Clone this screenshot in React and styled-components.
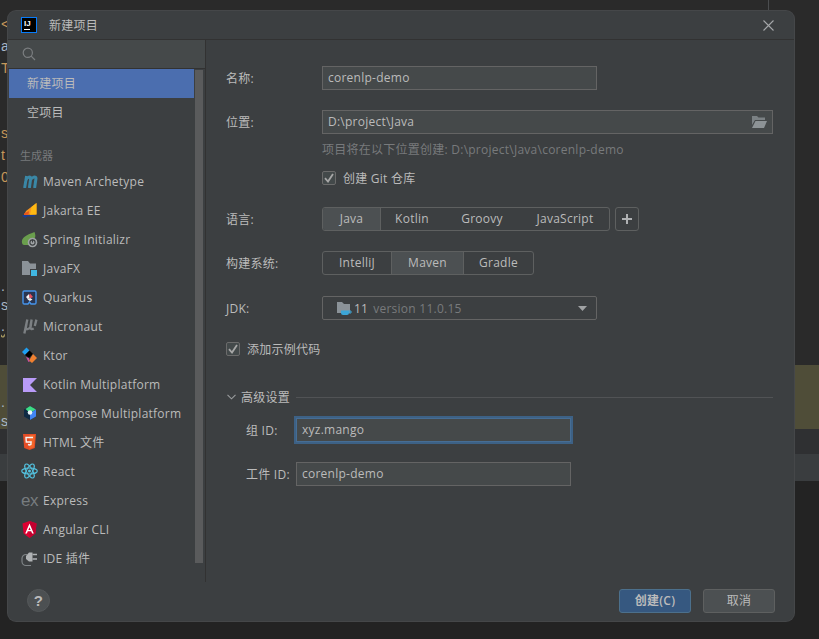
import React from 'react';
import styled, { createGlobalStyle } from 'styled-components';

const UI_FONT = `"Open Sans", "Noto Sans CJK SC", sans-serif`;

const GlobalStyle = createGlobalStyle`
  html, body {
    margin: 0;
    padding: 0;
    background: #232323;
  }
  * {
    box-sizing: border-box;
  }
`;

const Stage = styled.div`
  position: relative;
  width: 819px;
  height: 639px;
  overflow: hidden;
  display: flex;
  flex-direction: column;
  background: #232323;
`;

const EditorArea = styled.div`
  position: relative;
  height: 365px;
  background: #2a2a2a;
  padding-top: 14px;
  display: flex;
  flex-direction: column;
`;

const EditorGuide = styled.div`
  position: absolute;
  left: 768px;
  top: 0;
  width: 1px;
  height: 12px;
  background: #4b4d4f;
`;

const CodeLine = styled.div`
  height: ${(p) => p.$h || 21.8}px;
  padding-left: 1px;
  font: 14px/21.8px "Liberation Sans", sans-serif;
  color: ${(p) => p.$color || '#a9b7c6'};
  text-decoration: ${(p) => (p.$wavy ? 'underline wavy #a89a60' : 'none')};
`;

const Highlight = styled.div`
  height: 64px;
  background: #4f4d38;
  padding: 28px 0 0 1px;
  font: 14px/19px "Liberation Sans", sans-serif;
  color: #a9b7c6;
`;

const DarkBand = styled.div`
  height: 25px;
  background: #2f3032;
`;

const PanelBand = styled.div`
  height: 27px;
  background: #3a3d3f;
`;

const Dialog = styled.div`
  position: absolute;
  left: 8px;
  top: 11px;
  width: 786px;
  height: 610px;
  background: #3c3f41;
  border-radius: 8px;
  overflow: hidden;
  display: flex;
  flex-direction: column;
  font-family: ${UI_FONT};
  font-size: 12px;
  letter-spacing: 0.25px;
  color: #bbbbbb;
  box-shadow: 0 0 0 1px #454749;
`;

const TitleBar = styled.div`
  height: 29px;
  flex-shrink: 0;
  display: flex;
  align-items: center;
  padding: 0 20px 0 13px;
  border-bottom: 1px solid #323232;
`;

const TitleText = styled.span`
  margin-left: 12px;
  flex: 1;
`;

const AppLogo = styled.div`
  width: 16px;
  height: 16px;
  background: #000;
  border: 1px solid #087cfa;
  color: #fff;
  font: bold 8px/9px "Liberation Sans", sans-serif;
  letter-spacing: 0;
  padding: 1px 0 0 2px;
  position: relative;
  &::after {
    content: '';
    position: absolute;
    left: 2px;
    bottom: 2px;
    width: 6px;
    height: 1px;
    background: #fff;
  }
`;

const Body = styled.div`
  flex: 1;
  min-height: 0;
  display: flex;
`;

const Sidebar = styled.div`
  width: 198px;
  flex-shrink: 0;
  border-right: 1px solid #323232;
  display: flex;
  flex-direction: column;
`;

const SearchBox = styled.div`
  height: 29px;
  flex-shrink: 0;
  background: #45494a;
  border-bottom: 1px solid #323232;
  padding-left: 14px;
  display: flex;
  align-items: center;
`;

const SideScroll = styled.div`
  flex: 1;
  min-height: 0;
  display: flex;
`;

const List = styled.div`
  width: 186px;
  padding-left: 1px;
`;

const Scrollbar = styled.div`
  width: 8px;
  height: 493px;
  margin: 1px 0 0 1px;
  background: #5a5b5c;
`;

const TopItem = styled.div`
  height: 29px;
  line-height: 30px;
  padding-left: 18px;
  background: ${(p) => (p.$selected ? '#4b6eaf' : 'transparent')};
`;

const GroupLabel = styled.div`
  height: 40px;
  padding: 21px 0 0 11px;
  font-size: 11px;
  line-height: 16px;
  letter-spacing: 0;
  color: #77797b;
`;

const Item = styled.div`
  height: 29px;
  padding: 0 0 1px 12px;
  display: flex;
  align-items: center;
  gap: 5px;
`;

const IconBox = styled.div`
  width: 17px;
  height: 17px;
  flex-shrink: 0;
  display: flex;
  align-items: center;
  justify-content: center;
`;

const ExLogo = styled.span`
  font: 17px/17px "Liberation Sans", sans-serif;
  letter-spacing: -0.5px;
  color: #777c7f;
`;

const Main = styled.div`
  flex: 1;
  padding: 26px 21px 0 20px;
  display: flex;
  flex-direction: column;
`;

const Row = styled.div`
  display: flex;
  align-items: center;
  height: 24px;
  margin-top: ${(p) => p.$top || 0}px;
`;

const Label = styled.div`
  width: 96px;
  flex-shrink: 0;
`;

const Input = styled.div`
  width: ${(p) => p.$w}px;
  height: 24px;
  background: #45494a;
  border: 1px solid #646464;
  padding: 0 5px;
  line-height: 22px;
  display: flex;
  align-items: center;
  justify-content: space-between;
`;

const Hint = styled.div`
  margin: 7px 0 0 96px;
  height: 18px;
  line-height: 18px;
  color: #787a7c;
`;

const CheckRow = styled.div`
  display: flex;
  align-items: center;
  gap: 7px;
  height: 14px;
  margin: ${(p) => p.$top}px 0 0 ${(p) => p.$left || 0}px;
`;

const CheckBox = styled.div`
  width: 14px;
  height: 14px;
  background: #43494a;
  border: 1px solid #6b6b6b;
  border-radius: 2px;
  display: flex;
  align-items: center;
  justify-content: center;
`;

const Segments = styled.div`
  display: flex;
  height: 24px;
  border: 1px solid #5e6060;
  border-radius: 3px;
  overflow: hidden;
`;

const Segment = styled.div`
  width: ${(p) => p.$w}px;
  text-align: center;
  line-height: 21px;
  background: ${(p) => (p.$active ? '#4c5052' : 'transparent')};
  border-left: ${(p) => (p.$divider ? '1px solid #5e6060' : '0')};
  border-right: ${(p) => (p.$active ? '1px solid #5e6060' : '0')};
`;

const PlusButton = styled.div`
  width: 24px;
  height: 24px;
  margin-left: 5px;
  border: 1px solid #5e6060;
  border-radius: 3px;
  display: flex;
  align-items: center;
  justify-content: center;
`;

const Select = styled.div`
  width: 275px;
  height: 24px;
  border: 1px solid #646464;
  border-radius: 2px;
  background: #3c3f41;
  padding: 0 9px 0 13px;
  display: flex;
  align-items: center;
  gap: 2px;
`;

const Version = styled.span`
  color: #787a7c;
  margin-left: 3px;
  flex: 1;
`;

const SectionHead = styled.div`
  display: flex;
  align-items: center;
  height: 18px;
  margin: 32px 0 0 1px;
`;

const SectionTitle = styled.span`
  margin-left: 5px;
`;

const SectionLine = styled.div`
  flex: 1;
  height: 1px;
  background: #515355;
  margin-left: 6px;
`;

const SubRow = styled.div`
  display: flex;
  align-items: center;
  height: 24px;
  margin-top: ${(p) => p.$top}px;
  padding-left: 20px;
`;

const SubLabel = styled.div`
  width: 50px;
  flex-shrink: 0;
  white-space: nowrap;
`;

const FocusInput = styled(Input)`
  border: 1px solid #466d94;
  outline: 2px solid #3d6185;
`;

const Footer = styled.div`
  height: 39px;
  flex-shrink: 0;
  display: flex;
  align-items: flex-start;
  padding: 7px 19px 0 19px;
`;

const HelpButton = styled.div`
  width: 23px;
  height: 23px;
  border-radius: 50%;
  background: #4c5052;
  border: 1px solid #55585a;
  color: #bbbbbb;
  font: bold 15px/21px "Liberation Sans", sans-serif;
  text-align: center;
`;

const FooterSpacer = styled.div`
  flex: 1;
`;

const Button = styled.div`
  width: 72px;
  height: 24px;
  margin-left: 12px;
  border-radius: 3px;
  text-align: center;
  line-height: 22px;
  background: ${(p) => (p.$primary ? '#365880' : '#4c5052')};
  border: 1px solid ${(p) => (p.$primary ? '#4c708c' : '#5e6060')};
  font-weight: ${(p) => (p.$primary ? 600 : 400)};
`;

const SearchIcon = () => (
  <svg width="14" height="14" viewBox="0 0 14 14" fill="none" stroke="#7b7e80" strokeWidth="1.2">
    <circle cx="5.8" cy="5.8" r="4.6" />
    <path d="M9.2 9.2 13 13" />
  </svg>
);

const MavenIcon = () => (
  <svg width="16" height="13" viewBox="0 0 16 13" fill="none" stroke="#3a87a6" strokeWidth="3">
    <path d="M2.6 13 4.6 1M3.8 5.5C5 2 9.3.5 8.6 4L7.4 13M8.3 5.5C9.6 2 14.6.5 13.9 4L12.6 13" />
  </svg>
);

const JakartaIcon = () => (
  <svg width="17" height="17" viewBox="0 0 17 17">
    <path d="M15.5 1 5 9l-2 4 12.5-.5z" fill="#f7941e" />
    <path d="M15.5 1 10.5 5 9 12.8l6.5-.3z" fill="#fdb913" />
    <path d="M1.5 13h13l-1 1.5H6L4.5 16 1.5 14.5z" fill="#1d3c8f" />
    <path d="M3 11.5 8 9 7.5 12.8 3 13z" fill="#e8561d" />
  </svg>
);

const SpringIcon = () => (
  <svg width="17" height="17" viewBox="0 0 17 17">
    <path d="M1 12C0 7 5 4 13.5 1c1 3 1.5 5-.5 7L8 14H3C2 14 1.4 13 1 12z" fill="#6a9e4d" />
    <circle cx="11.5" cy="11.5" r="4.8" fill="#9fa3a5" />
    <circle cx="11.5" cy="11.5" r="2.6" fill="none" stroke="#3c3f41" strokeWidth="1.1" />
    <path d="M11.5 8.5v3" stroke="#3c3f41" strokeWidth="1.1" />
  </svg>
);

const JavaFxIcon = () => (
  <svg width="17" height="17" viewBox="0 0 17 17">
    <path d="M1 1h6l2 2.5h6V9H9v6H1z" fill="#8b9298" />
    <rect x="10" y="10" width="6" height="6" fill="#40b6e0" />
  </svg>
);

const QuarkusIcon = () => (
  <svg width="15" height="15" viewBox="0 0 15 15">
    <path d="M6 14H2.2A1.2 1.2 0 0 1 1 12.8V2.2A1.2 1.2 0 0 1 2.2 1h10.6A1.2 1.2 0 0 1 14 2.2v10.6a1.2 1.2 0 0 1-1.2 1.200H9l-1.500-2z" fill="#2a3550" stroke="#4695eb" strokeWidth="1.4" />
    <path d="M4 7 7 4l1 3-2 2.5z" fill="#f2f2f2" />
    <path d="M8 3.5 11 7 8 8.5 7 6z" fill="#e54f5c" />
    <path d="M5.5 9.5 8 8l2.5 1.5L8 11z" fill="#f2f2f2" />
  </svg>
);

const MicronautIcon = () => (
  <svg width="16" height="16" viewBox="0 0 15 15" fill="none" stroke="#7c8083" strokeWidth="2.2">
    <path d="M5 1.5 2.2 14.500M4.300 5l-.7 4c-.3 2 3.500 2 4.200-.8L9 1.500M9 1.500 8 9c-.2 1.600 1.300 1.700 3 .8M13.500 1.500 12 7.500" />
  </svg>
);

const KtorIcon = () => (
  <svg width="17" height="17" viewBox="0 0 17 17">
    <path d="M1 5 5.5.5 8.5 3.5 4 8z" fill="#1e9ff2" />
    <path d="M8.5 3.5 12 7 8 11 4 8z" fill="#000" />
    <path d="M12 7 16 11 11 16 8 13.5z" fill="#f08030" />
    <path d="M5 10 8 11 8 13.5 9 14.5 7.5 15z" fill="#c94f9e" />
  </svg>
);

const KotlinIcon = () => (
  <svg width="15" height="15" viewBox="0 0 15 15">
    <path d="M1 1h14L8 8l7 7H1z" fill="#b99bf8" />
  </svg>
);

const ComposeIcon = () => (
  <svg width="16" height="16" viewBox="0 0 16 16">
    <path d="M8 1 14 4.5v7L8 15 2 11.5v-7z" fill="#0e2a44" />
    <path d="M8 1 14 4.5 8 8 3.5 4z" fill="#3ddc84" />
    <path d="M14 4.5v7L8 15V8z" fill="#4285f4" />
    <circle cx="8" cy="7.5" r="2.3" fill="#e8f4f8" />
  </svg>
);

const HtmlIcon = () => (
  <svg width="15" height="16" viewBox="0 0 15 16">
    <path d="M1 0h13l-1.200 14L7.500 16 2.200 14z" fill="#e44d26" />
    <path d="M7.500 1v13.800l4.300-1.300L12.800 1z" fill="#f16529" />
    <path d="M11 3.500H4l.3 4.500h4.800l-.2 2.500-1.400.5-1.500-.5" fill="none" stroke="#f4f4f4" strokeWidth="1.4" />
  </svg>
);

const ReactIcon = () => (
  <svg width="17" height="16" viewBox="-8.5 -8 17 16" fill="none" stroke="#53c1de" strokeWidth="1.1">
    <circle r="1.5" fill="#53c1de" stroke="none" />
    <ellipse rx="7.8" ry="3" />
    <ellipse rx="7.8" ry="3" transform="rotate(60)" />
    <ellipse rx="7.8" ry="3" transform="rotate(120)" />
  </svg>
);

const AngularIcon = () => (
  <svg width="15" height="17" viewBox="0 0 15 17">
    <path d="M7.5 0 14.5 2.500 13.400 12.500 7.500 17 1.600 12.500.5 2.500z" fill="#dd0031" />
    <path d="M7.5 0 14.5 2.500 13.400 12.500 7.500 17z" fill="#c3002f" />
    <path d="M7.5 2.500 3.200 12.500h1.700l.9-2.200h3.400l.9 2.200h1.700zM6.400 9 7.500 6.200 8.600 9z" fill="#fff" />
  </svg>
);

const PluginIcon = () => (
  <svg width="17" height="17" viewBox="0 0 17 17" fill="none">
    <path d="M6 4.5H5a4 4 0 0 0-4 4v3a4 4 0 0 0 4 4h5" stroke="#7f8487" strokeWidth="1.2" />
    <path d="M5 6 8 2.5h3.500v9H8L5 9z" fill="#b0b3b5" />
    <path d="M11.5 4.500H16M11.500 9H16" stroke="#b0b3b5" strokeWidth="1.4" />
  </svg>
);

const FolderOpenIcon = () => (
  <svg width="15" height="12" viewBox="0 0 15 12">
    <path d="M0 0h5l1.500 1.500H13V4H3L0 9z" fill="#7b8184" />
    <path d="M3.5 5H15l-3 7H0z" fill="#8d9396" />
  </svg>
);

const CheckMark = () => (
  <svg width="10" height="10" viewBox="0 0 10 10" fill="none" stroke="#a7a7a7" strokeWidth="1.8">
    <path d="M1 5.2 4 8.500 9 1" />
  </svg>
);

const PlusIcon = () => (
  <svg width="10" height="10" viewBox="0 0 10 10" stroke="#afb1b3" strokeWidth="2">
    <path d="M5 0v10M0 5h10" />
  </svg>
);

const CloseIcon = () => (
  <svg width="11" height="11" viewBox="0 0 11 11" stroke="#a4a6a8" strokeWidth="1.1">
    <path d="M.5.5l10 10M10.5.5l-10 10" />
  </svg>
);

const JdkIcon = () => (
  <svg width="16" height="15" viewBox="0 0 16 15">
    <path d="M1 1h5l2 2h6v9H1z" fill="#8b9298" />
    <path d="M5 9.5h8V12a2 2 0 0 1-2 2H7a2 2 0 0 1-2-2z" fill="#3ca5d6" />
    <path d="M13 10h2v2h-2" fill="none" stroke="#3ca5d6" strokeWidth="1" />
  </svg>
);

const Caret = () => (
  <svg width="9" height="5" viewBox="0 0 9 5">
    <path d="M0 0h9L4.5 5z" fill="#a0a2a4" />
  </svg>
);

const Chevron = () => (
  <svg width="9" height="6" viewBox="0 0 9 6" fill="none" stroke="#9a9c9e" strokeWidth="1.1">
    <path d="M.5.8l4 4 4-4" />
  </svg>
);

const generators = [
  { name: 'Maven Archetype', icon: <MavenIcon /> },
  { name: 'Jakarta EE', icon: <JakartaIcon /> },
  { name: 'Spring Initializr', icon: <SpringIcon /> },
  { name: 'JavaFX', icon: <JavaFxIcon /> },
  { name: 'Quarkus', icon: <QuarkusIcon /> },
  { name: 'Micronaut', icon: <MicronautIcon /> },
  { name: 'Ktor', icon: <KtorIcon /> },
  { name: 'Kotlin Multiplatform', icon: <KotlinIcon /> },
  { name: 'Compose Multiplatform', icon: <ComposeIcon /> },
  { name: 'HTML 文件', icon: <HtmlIcon /> },
  { name: 'React', icon: <ReactIcon /> },
  { name: 'Express', icon: <ExLogo>ex</ExLogo> },
  { name: 'Angular CLI', icon: <AngularIcon /> },
  { name: 'IDE 插件', icon: <PluginIcon /> },
];

const App = () => {
  return (
    <Stage>
      <GlobalStyle />
      <EditorArea>
        <EditorGuide />
        <CodeLine $color="#c5975b">&lt;</CodeLine>
        <CodeLine>a</CodeLine>
        <CodeLine $color="#c5975b">T</CodeLine>
        <CodeLine />
        <CodeLine />
        <CodeLine $color="#c5975b">s</CodeLine>
        <CodeLine $color="#c5975b">t</CodeLine>
        <CodeLine $color="#c5975b">0</CodeLine>
        <CodeLine />
        <CodeLine />
        <CodeLine />
        <CodeLine />
        <CodeLine $h={19}>.</CodeLine>
        <CodeLine>s</CodeLine>
        <CodeLine $wavy>.</CodeLine>
      </EditorArea>
      <Highlight>
        .<br />s
      </Highlight>
      <DarkBand />
      <PanelBand />

      <Dialog>
        <TitleBar>
          <AppLogo>IJ</AppLogo>
          <TitleText>新建项目</TitleText>
          <CloseIcon />
        </TitleBar>
        <Body>
          <Sidebar>
            <SearchBox>
              <SearchIcon />
            </SearchBox>
            <SideScroll>
              <List>
                <TopItem $selected>新建项目</TopItem>
                <TopItem>空项目</TopItem>
                <GroupLabel>生成器</GroupLabel>
                {generators.map((g) => (
                  <Item key={g.name}>
                    <IconBox>{g.icon}</IconBox>
                    {g.name}
                  </Item>
                ))}
              </List>
              <Scrollbar />
            </SideScroll>
          </Sidebar>
          <Main>
            <Row>
              <Label>名称:</Label>
              <Input $w={275}>corenlp-demo</Input>
            </Row>
            <Row $top={20}>
              <Label>位置:</Label>
              <Input $w={451}>
                D:\project\Java
                <FolderOpenIcon />
              </Input>
            </Row>
            <Hint>项目将在以下位置创建: D:\project\Java\corenlp-demo</Hint>
            <CheckRow $top={12} $left={96}>
              <CheckBox>
                <CheckMark />
              </CheckBox>
              创建 Git 仓库
            </CheckRow>
            <Row $top={22}>
              <Label>语言:</Label>
              <Segments>
                <Segment $w={58} $active>Java</Segment>
                <Segment $w={62}>Kotlin</Segment>
                <Segment $w={78}>Groovy</Segment>
                <Segment $w={88}>JavaScript</Segment>
              </Segments>
              <PlusButton>
                <PlusIcon />
              </PlusButton>
            </Row>
            <Row $top={20}>
              <Label>构建系统:</Label>
              <Segments>
                <Segment $w={68}>IntelliJ</Segment>
                <Segment $w={73} $active $divider>Maven</Segment>
                <Segment $w={69}>Gradle</Segment>
              </Segments>
            </Row>
            <Row $top={21}>
              <Label>JDK:</Label>
              <Select>
                <JdkIcon />
                11
                <Version>version 11.0.15</Version>
                <Caret />
              </Select>
            </Row>
            <CheckRow $top={22}>
              <CheckBox>
                <CheckMark />
              </CheckBox>
              添加示例代码
            </CheckRow>
            <SectionHead>
              <Chevron />
              <SectionTitle>高级设置</SectionTitle>
              <SectionLine />
            </SectionHead>
            <SubRow $top={12}>
              <SubLabel>组 ID:</SubLabel>
              <FocusInput $w={275}>xyz.mango</FocusInput>
            </SubRow>
            <SubRow $top={20}>
              <SubLabel>工件 ID:</SubLabel>
              <Input $w={275}>corenlp-demo</Input>
            </SubRow>
          </Main>
        </Body>
        <Footer>
          <HelpButton>?</HelpButton>
          <FooterSpacer />
          <Button $primary>创建(C)</Button>
          <Button>取消</Button>
        </Footer>
      </Dialog>
    </Stage>
  );
};

export default App;
